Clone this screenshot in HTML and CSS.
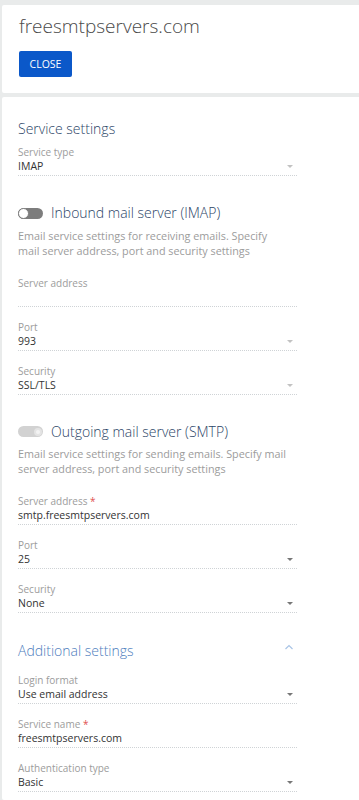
FILE: index.html
```html
<!DOCTYPE html>
<html>
<head>
<meta charset="utf-8">
<link rel="stylesheet" href="styles.css">
</head>
<body>
<div class="page">
  <div class="card head">
    <div class="title">freesmtpservers.com</div>
    <button class="btn">CLOSE</button>
  </div>
  <div class="card body">
    <div class="section-title">Service settings</div>
    <div class="fields first">
      <div class="field">
        <div class="label">Service type</div>
        <div class="value">IMAP<span class="arrow light"></span></div>
      </div>
    </div>

    <div class="toggle-row">
      <span class="toggle off"><span class="knob"></span></span>
      <span class="toggle-title">Inbound mail server (IMAP)</span>
    </div>
    <div class="desc">Email service settings for receiving emails. Specify<br>mail server address, port and security settings</div>
    <div class="fields">
      <div class="field">
        <div class="label">Server address</div>
        <div class="value"></div>
      </div>
      <div class="field">
        <div class="label">Port</div>
        <div class="value">993<span class="arrow light"></span></div>
      </div>
      <div class="field">
        <div class="label">Security</div>
        <div class="value">SSL/TLS<span class="arrow light"></span></div>
      </div>
    </div>

    <div class="toggle-row">
      <span class="toggle on"><span class="knob"></span></span>
      <span class="toggle-title">Outgoing mail server (SMTP)</span>
    </div>
    <div class="desc">Email service settings for sending emails. Specify mail<br>server address, port and security settings</div>
    <div class="fields">
      <div class="field">
        <div class="label">Server address <span class="req">*</span></div>
        <div class="value">smtp.freesmtpservers.com</div>
      </div>
      <div class="field">
        <div class="label">Port</div>
        <div class="value">25<span class="arrow"></span></div>
      </div>
      <div class="field">
        <div class="label">Security</div>
        <div class="value">None<span class="arrow"></span></div>
      </div>
    </div>

    <div class="section-title additional">
      <span>Additional settings</span>
      <svg class="chev" width="10" height="6" viewBox="0 0 10 6"><path d="M1.5 5 L5 1.5 L8.5 5" fill="none" stroke="#a9c4e6" stroke-width="1.2"/></svg>
    </div>
    <div class="fields add">
      <div class="field">
        <div class="label">Login format</div>
        <div class="value">Use email address<span class="arrow"></span></div>
      </div>
      <div class="field">
        <div class="label">Service name <span class="req">*</span></div>
        <div class="value">freesmtpservers.com</div>
      </div>
      <div class="field">
        <div class="label">Authentication type</div>
        <div class="value">Basic<span class="arrow"></span></div>
      </div>
    </div>
  </div>
</div>
</body>
</html>
```

FILE: styles.css
```css
* { box-sizing: border-box; }
html, body {
  margin: 0;
  padding: 0;
  background: #e9ebeb;
  font-family: "Open Sans", "Noto Sans", sans-serif;
}
.page {
  padding: 5px 0 0 2px;
  display: flex;
  flex-direction: column;
  gap: 4px;
  height: 800px;
  overflow: hidden;
}
.card {
  background: #fff;
  border-radius: 2px 0 0 2px;
}
.head {
  padding: 8px 17px 16px;
  display: flex;
  flex-direction: column;
  align-items: flex-start;
}
.title {
  font-size: 19px;
  line-height: 26px;
  color: #4a4a4a;
  font-weight: 300;
}
.btn {
  margin-top: 12px;
  height: 26px;
  width: 53px;
  padding: 0;
  border: none;
  border-radius: 2px;
  background: #0b58c9;
  color: #fff;
  font-family: "Open Sans", sans-serif;
  font-size: 10.5px;
  letter-spacing: 0;
}
.body {
  flex: 1;
  padding: 22px 16px 0;
}
.section-title {
  font-size: 14px;
  line-height: 20px;
  color: #2b4466;
  font-weight: 300;
  width: 279px;
}
.additional {
  margin-top: 28px;
  color: #4d7dbd;
  display: flex;
  justify-content: space-between;
  align-items: center;
}
.chev { margin-right: 3px; margin-top: -8px; }
.fields { display: flex; flex-direction: column; gap: 14px; width: 279px; }
.fields.first { margin-top: 7px; }
.fields.add { margin-top: 13px; }
.desc + .fields { margin-top: 19px; }
.field {
  border-bottom: 1px dotted #cfd3d6;
  padding-bottom: 2px;
}
.label {
  font-size: 10px;
  line-height: 13px;
  color: #9c9c9c;
}
.req { color: #e05050; }
.value {
  font-size: 10.5px;
  line-height: 14px;
  height: 14px;
  color: #333;
  position: relative;
}
.arrow {
  position: absolute;
  right: 4px;
  top: 6px;
  width: 0;
  height: 0;
  border-left: 3.5px solid transparent;
  border-right: 3.5px solid transparent;
  border-top: 3.5px solid #777;
}
.arrow.light { border-top-color: #c2c2c2; }
.toggle-row {
  margin-top: 27px;
  height: 20px;
  display: flex;
  align-items: center;
  gap: 8px;
}
.toggle {
  width: 25px;
  height: 11px;
  border-radius: 6px;
  position: relative;
  flex: none;
}
.toggle.off { background: #7d7d7d; }
.toggle.on { background: #d2d2d2; }
.knob {
  position: absolute;
  top: 0;
  width: 11px;
  height: 11px;
  border-radius: 50%;
  background: #fff;
}
.toggle.off .knob { left: 0; border: 1px solid #7d7d7d; }
.toggle.on .knob { right: 1px; top: 1.5px; width: 8px; height: 8px; border: 2px solid #e4e4e4; background: #f3f3f3; }
.toggle-title {
  font-size: 14px;
  line-height: 20px;
  color: #2b4466;
  font-weight: 300;
}
.desc {
  margin-top: 4.5px;
  font-size: 10.8px;
  line-height: 15px;
  color: #9c9c9c;
}
```
